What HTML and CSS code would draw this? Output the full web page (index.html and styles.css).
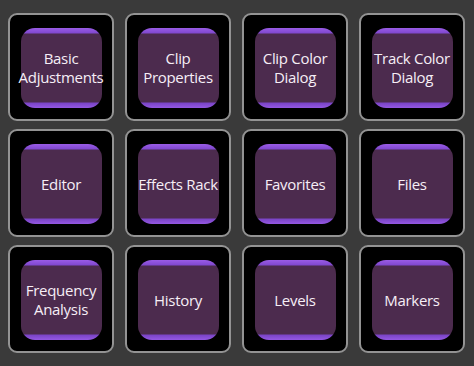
FILE: index.html
```html
<!DOCTYPE html>
<html>
<head>
<meta charset="utf-8">
<link rel="stylesheet" href="styles.css">
</head>
<body>
<div class="grid">
  <div class="cell"><div class="btn"><span class="ln">Basic</span><span class="ln">Adjustments</span></div></div>
  <div class="cell"><div class="btn"><span class="ln">Clip</span><span class="ln">Properties</span></div></div>
  <div class="cell"><div class="btn"><span class="ln">Clip Color</span><span class="ln">Dialog</span></div></div>
  <div class="cell"><div class="btn"><span class="ln">Track Color</span><span class="ln">Dialog</span></div></div>
  <div class="cell"><div class="btn"><span class="ln">Editor</span></div></div>
  <div class="cell"><div class="btn"><span class="ln">Effects Rack</span></div></div>
  <div class="cell"><div class="btn"><span class="ln">Favorites</span></div></div>
  <div class="cell"><div class="btn"><span class="ln">Files</span></div></div>
  <div class="cell"><div class="btn"><span class="ln">Frequency</span><span class="ln">Analysis</span></div></div>
  <div class="cell"><div class="btn"><span class="ln">History</span></div></div>
  <div class="cell"><div class="btn"><span class="ln">Levels</span></div></div>
  <div class="cell"><div class="btn"><span class="ln">Markers</span></div></div>
</div>
</body>
</html>
```
FILE: styles.css
```css
html, body {
  margin: 0;
  padding: 0;
  background: #3a3a3a;
  width: 474px;
  height: 366px;
  overflow: hidden;
}
.grid {
  display: grid;
  grid-template-columns: repeat(4, 106px);
  grid-template-rows: repeat(3, 108px);
  column-gap: 11px;
  row-gap: 8px;
  padding: 13px 0 0 8px;
}
.cell {
  box-sizing: border-box;
  border: 2px solid #939393;
  border-radius: 9px;
  background: #000;
  display: flex;
  align-items: center;
  justify-content: center;
}
.btn {
  width: 81px;
  height: 80px;
  margin-top: 2px;
  border-radius: 14px;
  background: linear-gradient(to bottom,
    #9a5ce6 0px, #8048cf 5px, #4c2b4e 6px,
    #4c2b4e 74px, #7a44c6 75px, #9458e2 80px);
  display: flex;
  flex-direction: column;
  align-items: center;
  justify-content: center;
  text-align: center;
  color: #f6eef6;
  font-family: "Open Sans", "Noto Sans", sans-serif;
  font-size: 15px;
  white-space: nowrap;
  letter-spacing: -0.3px;
}
.ln {
  display: block;
  line-height: 19px;
}
```
